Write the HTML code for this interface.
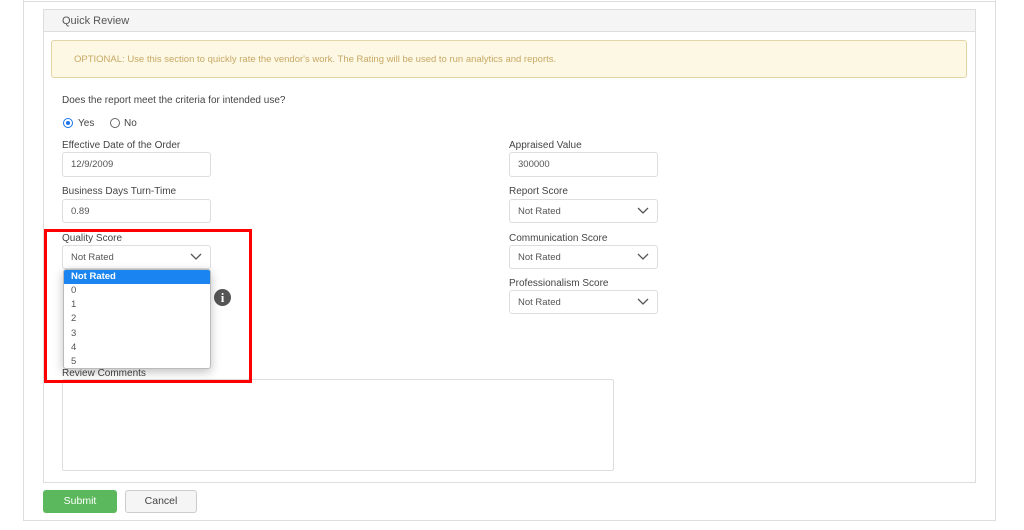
<!DOCTYPE html>
<html><head><style>
*{box-sizing:border-box;margin:0;padding:0}
body{width:1024px;height:530px;background:#fff;font-family:"Liberation Sans",sans-serif;position:relative;overflow:hidden;color:#333}
.a{position:absolute}
.lbl{position:absolute;font-size:10px;color:#444}
.in{position:absolute;border:1px solid #ddd;border-radius:3px;font-size:9.5px;color:#555;padding-left:8px;display:flex;align-items:center;background:#fff}
.chev{position:absolute;right:8px;top:50%;margin-top:-4px}
</style></head><body>
<div class="a" style="left:23px;top:-2px;width:973px;height:523px;border:1px solid #ddd;border-top:none"></div>
<div class="a" style="left:23px;top:0;width:973px;height:2px;border-bottom:1px solid #ddd"></div>
<div class="a" style="left:43px;top:9px;width:933px;height:474px;border:1px solid #ddd"></div>
<div class="a" style="left:44px;top:10px;width:931px;height:22px;background:#f5f5f5;border-bottom:1px solid #ddd;font-size:11px;color:#555;padding:5px 0 0 18px">Quick Review</div>
<div class="a" style="left:51px;top:40px;width:916px;height:38px;background:#fcf8e3;border:1px solid #e3d4a6;border-radius:3px;font-size:9.5px;color:#c9a867;padding:13px 0 0 22px">OPTIONAL: Use this section to quickly rate the vendor's work. The Rating will be used to run analytics and reports.</div>
<div class="lbl" style="left:62px;top:95px">Does the report meet the criteria for intended use?</div>
<div class="a" style="left:63px;top:118px;width:10px;height:10px;border:1px solid #1a73e8;border-radius:50%;background:#fff"><div class="a" style="left:2px;top:2px;width:4px;height:4px;border-radius:50%;background:#1a73e8"></div></div>
<div class="lbl" style="left:78px;top:118px">Yes</div>
<div class="a" style="left:110px;top:118px;width:10px;height:10px;border:1px solid #666;border-radius:50%"></div>
<div class="lbl" style="left:124px;top:118px">No</div>

<div class="lbl" style="left:62px;top:140px">Effective Date of the Order</div>
<div class="in" style="left:62px;top:152px;width:149px;height:25px">12/9/2009</div>
<div class="lbl" style="left:62px;top:186px">Business Days Turn-Time</div>
<div class="in" style="left:62px;top:199px;width:149px;height:24px">0.89</div>
<div class="lbl" style="left:62px;top:233px">Quality Score</div>
<div class="in" style="left:62px;top:245px;width:149px;height:24px">Not Rated<svg class="chev" width="12" height="8" viewBox="0 0 12 8"><path d="M1 1l5 5 5-5" fill="none" stroke="#555" stroke-width="1.3"/></svg></div>

<div class="lbl" style="left:509px;top:140px">Appraised Value</div>
<div class="in" style="left:509px;top:152px;width:149px;height:25px">300000</div>
<div class="lbl" style="left:509px;top:186px">Report Score</div>
<div class="in" style="left:509px;top:199px;width:149px;height:24px">Not Rated<svg class="chev" width="12" height="8" viewBox="0 0 12 8"><path d="M1 1l5 5 5-5" fill="none" stroke="#555" stroke-width="1.3"/></svg></div>
<div class="lbl" style="left:509px;top:233px">Communication Score</div>
<div class="in" style="left:509px;top:245px;width:149px;height:24px">Not Rated<svg class="chev" width="12" height="8" viewBox="0 0 12 8"><path d="M1 1l5 5 5-5" fill="none" stroke="#555" stroke-width="1.3"/></svg></div>
<div class="lbl" style="left:509px;top:278px">Professionalism Score</div>
<div class="in" style="left:509px;top:290px;width:149px;height:24px">Not Rated<svg class="chev" width="12" height="8" viewBox="0 0 12 8"><path d="M1 1l5 5 5-5" fill="none" stroke="#555" stroke-width="1.3"/></svg></div>

<div class="a" style="left:214px;top:289px;width:17px;height:17px;border-radius:50%;background:#555;color:#fff;font:bold 13px 'Liberation Serif',serif;text-align:center;line-height:17px">i</div>

<div class="lbl" style="left:62px;top:368px">Review Comments</div>
<div class="a" style="left:62px;top:379px;width:552px;height:92px;border:1px solid #ddd;border-radius:2px"></div>

<div class="a" style="left:63px;top:269px;width:148px;height:100px;background:#fff;border:1px solid #bbb;border-radius:3px;box-shadow:0 3px 10px rgba(0,0,0,.25);font-size:9.5px;color:#555;overflow:hidden">
<div style="background:#1a84f0;color:#fff;height:14px;line-height:14px;padding-left:7px;font-weight:bold">Not Rated</div>
<div style="padding-left:7px;line-height:14.2px">0<br>1<br>2<br>3<br>4<br>5</div>
</div>
<div class="a" style="left:44px;top:229px;width:208px;height:154px;border:3px solid #f00"></div>

<div class="a" style="left:43px;top:490px;width:74px;height:23px;background:#5cb85c;border-radius:3px;color:#fff;font-size:10.5px;text-align:center;line-height:23px">Submit</div>
<div class="a" style="left:125px;top:490px;width:72px;height:23px;background:#f5f5f5;border:1px solid #ccc;border-radius:3px;color:#444;font-size:10.5px;text-align:center;line-height:21px">Cancel</div>
</body></html>
